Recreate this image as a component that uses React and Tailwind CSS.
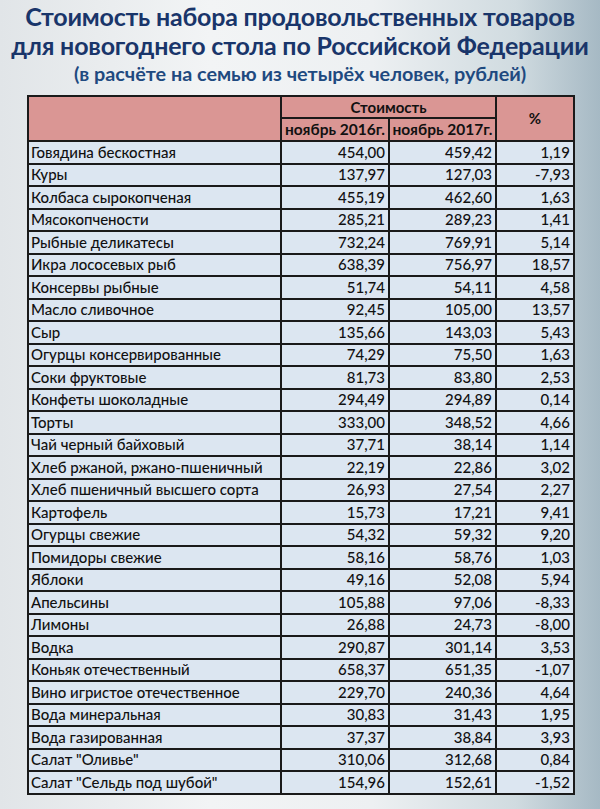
import React from "react";

const rows = [
  ["Говядина бескостная", "454,00", "459,42", "1,19"],
  ["Куры", "137,97", "127,03", "-7,93"],
  ["Колбаса сырокопченая", "455,19", "462,60", "1,63"],
  ["Мясокопчености", "285,21", "289,23", "1,41"],
  ["Рыбные деликатесы", "732,24", "769,91", "5,14"],
  ["Икра лососевых рыб", "638,39", "756,97", "18,57"],
  ["Консервы рыбные", "51,74", "54,11", "4,58"],
  ["Масло сливочное", "92,45", "105,00", "13,57"],
  ["Сыр", "135,66", "143,03", "5,43"],
  ["Огурцы консервированные", "74,29", "75,50", "1,63"],
  ["Соки фруктовые", "81,73", "83,80", "2,53"],
  ["Конфеты шоколадные", "294,49", "294,89", "0,14"],
  ["Торты", "333,00", "348,52", "4,66"],
  ["Чай черный байховый", "37,71", "38,14", "1,14"],
  ["Хлеб ржаной, ржано-пшеничный", "22,19", "22,86", "3,02"],
  ["Хлеб пшеничный высшего сорта", "26,93", "27,54", "2,27"],
  ["Картофель", "15,73", "17,21", "9,41"],
  ["Огурцы свежие", "54,32", "59,32", "9,20"],
  ["Помидоры свежие", "58,16", "58,76", "1,03"],
  ["Яблоки", "49,16", "52,08", "5,94"],
  ["Апельсины", "105,88", "97,06", "-8,33"],
  ["Лимоны", "26,88", "24,73", "-8,00"],
  ["Водка", "290,87", "301,14", "3,53"],
  ["Коньяк отечественный", "658,37", "651,35", "-1,07"],
  ["Вино игристое отечественное", "229,70", "240,36", "4,64"],
  ["Вода минеральная", "30,83", "31,43", "1,95"],
  ["Вода газированная", "37,37", "38,84", "3,93"],
  ["Салат \"Оливье\"", "310,06", "312,68", "0,84"],
  ["Салат \"Сельдь под шубой\"", "154,96", "152,61", "-1,52"],
];

export default function App() {
  return (
    <div
      className="w-[600px] h-[809px] overflow-hidden"
      style={{
        background:
          "linear-gradient(to right, #e1e5e8 0%, #f2f4f5 35%, #edf0f2 62%, #d0dbe0 86%, #a6b9c4 100%)",
        fontFamily: "Lato, 'Open Sans', sans-serif",
      }}
    >
      <div className="flex flex-col items-center pt-[2px]">
        <div className="text-[25px] leading-[29px] font-bold text-[#19356a] text-center tracking-[-0.2px]">
          Стоимость набора продовольственных товаров
        </div>
        <div className="text-[25px] leading-[29px] font-bold text-[#19356a] text-center tracking-[-0.2px]">
          для новогоднего стола по Российской Федерации
        </div>
        <div className="text-[19.8px] leading-[26px] font-bold text-[#1f4a80] text-center mt-[0px]">
          (в расчёте на семью из четырёх человек, рублей)
        </div>
      </div>
      <div className="pl-[27px] mt-[9px]">
        <table className="border-collapse text-[15px] text-[#111] w-[546px] table-fixed font-medium">
          <colgroup>
            <col className="w-[253px]" />
            <col className="w-[108px]" />
            <col className="w-[107px]" />
            <col className="w-[78px]" />
          </colgroup>
          <thead>
            <tr className="h-[22px]">
              <th rowSpan={2} className="border-2 border-[#1a1a1a] bg-[#da9694]"></th>
              <th colSpan={2} className="border-2 border-[#1a1a1a] bg-[#da9694] font-bold text-[15px] text-center leading-none">
                Стоимость
              </th>
              <th rowSpan={2} className="border-2 border-[#1a1a1a] bg-[#da9694] font-bold text-[15px] text-center">
                %
              </th>
            </tr>
            <tr className="h-[23px]">
              <th className="border-2 border-[#1a1a1a] bg-[#da9694] font-bold text-[15.5px] text-center leading-none whitespace-nowrap px-0">
                ноябрь 2016г.
              </th>
              <th className="border-2 border-[#1a1a1a] bg-[#da9694] font-bold text-[15.5px] text-center leading-none whitespace-nowrap px-0">
                ноябрь 2017г.
              </th>
            </tr>
          </thead>
          <tbody>
            {rows.map((r, i) => (
              <tr key={i} className="h-[22.5px]">
                <td className="border-2 border-[#1a1a1a] bg-[#dce6f1] pl-[2px] leading-none whitespace-nowrap">
                  {r[0]}
                </td>
                <td className="border-2 border-[#1a1a1a] bg-[#dce6f1] pr-[3px] text-right leading-none">
                  {r[1]}
                </td>
                <td className="border-2 border-[#1a1a1a] bg-[#dce6f1] pr-[3px] text-right leading-none">
                  {r[2]}
                </td>
                <td className="border-2 border-[#1a1a1a] bg-[#dce6f1] pr-[3px] text-right leading-none">
                  {r[3]}
                </td>
              </tr>
            ))}
          </tbody>
        </table>
      </div>
    </div>
  );
}
